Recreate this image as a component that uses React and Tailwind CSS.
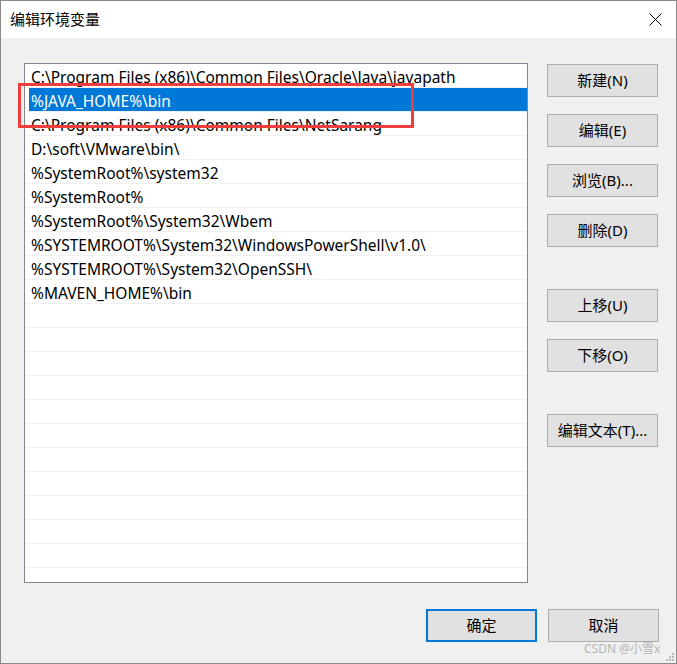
import React from "react";

const items = [
  "C:\\Program Files (x86)\\Common Files\\Oracle\\Java\\javapath",
  "%JAVA_HOME%\\bin",
  "C:\\Program Files (x86)\\Common Files\\NetSarang",
  "D:\\soft\\VMware\\bin\\",
  "%SystemRoot%\\system32",
  "%SystemRoot%",
  "%SystemRoot%\\System32\\Wbem",
  "%SYSTEMROOT%\\System32\\WindowsPowerShell\\v1.0\\",
  "%SYSTEMROOT%\\System32\\OpenSSH\\",
  "%MAVEN_HOME%\\bin",
];

const rows = [...items, ...Array(13).fill("")];

function Btn({ children, primary, className = "" }) {
  return (
    <div
      className={`w-[111px] h-[33px] flex items-center justify-center bg-[#e1e1e1] text-[15px] text-black ${
        primary ? "border-2 border-[#0078d7]" : "border border-[#adadad]"
      } ${className}`}
    >
      {children}
    </div>
  );
}

export default function App() {
  return (
    <div
      className="relative w-[677px] h-[664px] border border-[#8a8a8a] bg-[#f0f0f0] flex flex-col overflow-hidden"
      style={{ fontFamily: '"Noto Sans", "Noto Sans CJK SC", sans-serif' }}
    >
      <div className="h-[37px] bg-white flex items-center justify-between pl-[9px] pr-[14px] shrink-0">
        <span className="text-[15px] text-black leading-none">编辑环境变量</span>
        <svg width="13" height="13" viewBox="0 0 13 13">
          <path d="M0.5 0.5 L12.5 12.5 M12.5 0.5 L0.5 12.5" stroke="#000" strokeWidth="1" fill="none" />
        </svg>
      </div>
      <div className="flex pl-[23px] pt-[25px]">
        <div className="w-[504px] h-[520px] border border-[#828790] bg-white overflow-hidden">
          {rows.map((t, i) => (
            <div
              key={i}
              className={`h-[24px] flex items-center pt-[5px] border-b border-[#f0f0f0] ${
                i === 1 ? "ml-[4px] pl-[2px] bg-[#0078d7] text-white" : "ml-[1px] pl-[5px] text-black"
              } text-[15.5px] leading-none whitespace-nowrap`}
            >
              {t}
            </div>
          ))}
        </div>
        <div className="ml-[19px] mt-[1px] flex flex-col">
          <Btn>新建(N)</Btn>
          <Btn className="mt-[17px]">编辑(E)</Btn>
          <Btn className="mt-[17px]">浏览(B)...</Btn>
          <Btn className="mt-[17px]">删除(D)</Btn>
          <Btn className="mt-[42px]">上移(U)</Btn>
          <Btn className="mt-[17px]">下移(O)</Btn>
          <Btn className="mt-[42px]">编辑文本(T)...</Btn>
        </div>
      </div>
      <div className="flex justify-end gap-[11px] pr-[17px] mt-[26px]">
        <Btn primary>确定</Btn>
        <Btn>取消</Btn>
      </div>
      <div className="absolute left-[17px] top-[82px] w-[396px] h-[45px] border-[3px] border-[#ef3e3e]" />
      <div className="absolute left-[583px] top-[642px] text-[12px] text-[#b4b4b4] leading-none">CSDN @小雪x</div>
      <div className="absolute left-[665px] top-[652px] grid grid-cols-3 gap-[1px]">
        <span className="w-[2px] h-[2px]" />
        <span className="w-[2px] h-[2px]" />
        <span className="w-[2px] h-[2px] bg-[#b8b8b8]" />
        <span className="w-[2px] h-[2px]" />
        <span className="w-[2px] h-[2px] bg-[#b8b8b8]" />
        <span className="w-[2px] h-[2px] bg-[#b8b8b8]" />
        <span className="w-[2px] h-[2px] bg-[#b8b8b8]" />
        <span className="w-[2px] h-[2px] bg-[#b8b8b8]" />
        <span className="w-[2px] h-[2px] bg-[#b8b8b8]" />
      </div>
    </div>
  );
}
